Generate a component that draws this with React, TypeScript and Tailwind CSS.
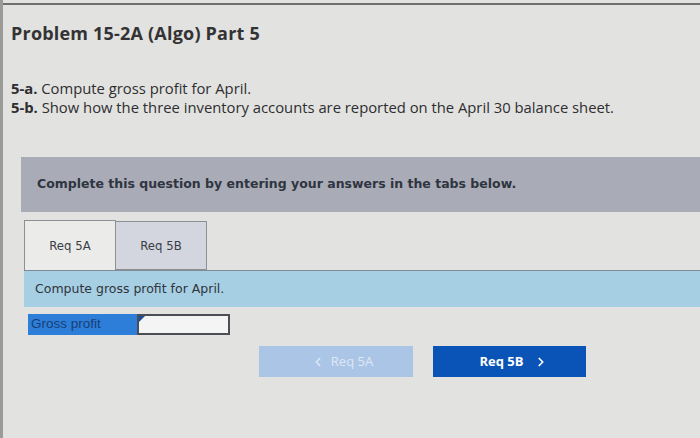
import React from "react";
import { ChevronLeft, ChevronRight } from "lucide-react";

export default function App() {
  return (
    <div className="w-[700px] h-[438px] overflow-hidden bg-[#e2e2e0] border-l-[3px] border-[#9a9a98] font-['Open_Sans',sans-serif] text-[#2e2e30]">
      <div className="border-t-2 border-[#6f6f70] mt-[3px]" />
      <div className="pl-[8px] pt-[17px]">
        <h1 className="text-[18px] font-bold leading-[22px] text-[#333335] tracking-[0.2px]">Problem 15-2A (Algo) Part 5</h1>
        <div className="mt-[35px] text-[14.8px] leading-[19px]">
          <p>
            <span className="font-bold">5-a.</span> Compute gross profit for April.
          </p>
          <p>
            <span className="font-bold">5-b.</span> Show how the three inventory accounts are reported on the April 30 balance sheet.
          </p>
        </div>
      </div>

      <div className="ml-[18px] mt-[40px] h-[55px] bg-[#a9abb7] flex items-center pl-[16px]">
        <span className="font-['DejaVu_Sans',sans-serif] font-bold text-[12.5px] text-[#2f3540]">
          Complete this question by entering your answers in the tabs below.
        </span>
      </div>

      <div className="ml-[21px] mt-[8px] flex font-['DejaVu_Sans_Condensed','DejaVu_Sans',sans-serif] text-[13px] text-[#3a3d45]">
        <div className="w-[92px] h-[50px] bg-[#ebebea] border border-b-0 border-[#8d8f94] flex items-center justify-center">
          Req 5A
        </div>
        <div className="w-[91px] h-[49px] mt-[1px] bg-[#d3d6de] border border-l-0 border-[#8d8f94] flex items-center justify-center">
          Req 5B
        </div>
      </div>
      <div className="ml-[21px] h-[37px] bg-[#a6cfe3] border-t border-[#7f8c96] flex items-center pl-[11px] font-['DejaVu_Sans',sans-serif] text-[12.5px] text-[#30343c]">
        Compute gross profit for April.
      </div>

      <div className="ml-[25px] mt-[7px] flex h-[21px] font-['Liberation_Sans',sans-serif] text-[13.5px]">
        <div className="w-[109px] bg-[#2d7ed8] text-[#173e78] pl-[3px] flex items-center">Gross profit</div>
        <div className="relative w-[93px] bg-[#f4f4f4] border-2 border-[#4b4e57]">
          <div className="absolute left-0 top-0 w-0 h-0 border-t-[6px] border-r-[6px] border-t-[#1b4e96] border-r-transparent" />
        </div>
      </div>

      <div className="flex gap-[20px] ml-[256px] mt-[11px] font-['Open_Sans',sans-serif] text-[13px]">
        <div className="w-[154px] h-[31px] bg-[#abc5e6] text-[#dfe8f5] flex items-center justify-center gap-[6px] pl-[12px]">
          <ChevronLeft size={14} strokeWidth={2.5} />
          <span>Req 5A</span>
        </div>
        <div className="w-[153px] h-[31px] bg-[#0b54b7] text-white font-bold flex items-center justify-center gap-[10px] pl-[8px]">
          <span>Req 5B</span>
          <ChevronRight size={14} strokeWidth={3} />
        </div>
      </div>
    </div>
  );
}
